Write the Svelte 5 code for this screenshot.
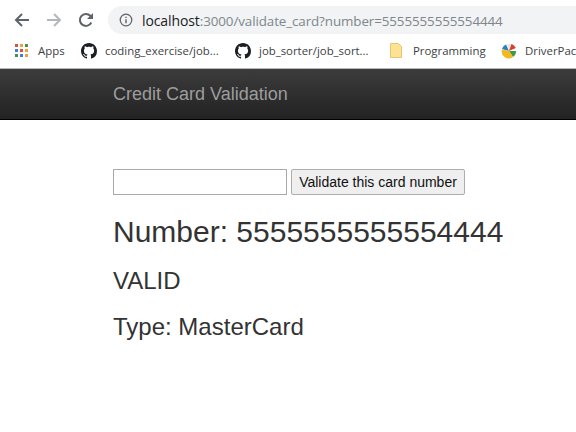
<script>
  const bookmarks = [
    { kind: 'gh', label: 'coding_exercise/job...', w: 154 },
    { kind: 'gh', label: 'job_sorter/job_sort...', w: 155 },
    { kind: 'folder', label: 'Programming', w: 111 },
    { kind: 'driver', label: 'DriverPack Online', w: 120 }
  ];
  const ghPath = 'M8 0C3.58 0 0 3.58 0 8c0 3.54 2.29 6.53 5.47 7.59.4.07.55-.17.55-.38 0-.19-.01-.82-.01-1.49-2.01.37-2.53-.49-2.69-.94-.09-.23-.48-.94-.82-1.13-.28-.15-.68-.52-.01-.53.63-.01 1.08.58 1.23.82.72 1.21 1.87.87 2.33.66.07-.52.28-.87.51-1.07-1.78-.2-3.64-.89-3.64-3.95 0-.87.31-1.59.82-2.15-.08-.2-.36-1.02.08-2.12 0 0 .67-.21 2.2.82.64-.18 1.32-.27 2-.27s1.36.09 2 .27c1.53-1.04 2.2-.82 2.2-.82.44 1.1.16 1.92.08 2.12.51.56.82 1.27.82 2.15 0 3.07-1.87 3.75-3.65 3.95.29.25.54.73.54 1.48 0 1.07-.01 1.93-.01 2.2 0 .21.15.46.55.38A8.01 8.01 0 0 0 16 8c0-4.42-3.58-8-8-8z';
  const dotColors = ['#d9503f', '#e8a33d', '#4a8f4f', '#3f7fd9', '#d9503f', '#e8a33d', '#4a8f4f', '#3f7fd9', '#e8a33d'];
</script>

<div class="page">
  <div class="toolbar">
    <button class="nav" aria-label="Back">
      <svg viewBox="0 0 16 16" width="16" height="16"><path d="M15 8H2.5M8 2 2 8l6 6" fill="none" stroke="#5f6368" stroke-width="2"/></svg>
    </button>
    <button class="nav" aria-label="Forward">
      <svg viewBox="0 0 16 16" width="16" height="16"><path d="M1 8h12.5M8 2l6 6-6 6" fill="none" stroke="#b4b7ba" stroke-width="2"/></svg>
    </button>
    <button class="nav" aria-label="Reload">
      <svg viewBox="0 0 16 16" width="16" height="16"><path d="M13.3 10.5A6 6 0 1 1 12.3 3.8L14 5.5" fill="none" stroke="#5f6368" stroke-width="2"/><path d="M15 1v6H9z" fill="#5f6368"/></svg>
    </button>
    <div class="omnibox">
      <svg class="info" viewBox="0 0 16 16" width="14" height="14"><circle cx="8" cy="8" r="6.6" fill="none" stroke="#5f6368" stroke-width="1.4"/><path d="M8 7v4.6M8 4.2v1.6" stroke="#5f6368" stroke-width="1.6"/></svg>
      <span class="url"><span class="host">localhost</span>:3000/validate_card?number=5555555555554444</span>
    </div>
  </div>

  <div class="bookmarks">
    <div class="bm apps">
      <svg viewBox="0 0 13 13" width="13" height="13">
        {#each dotColors as c, i}
          <rect x={(i % 3) * 5} y={Math.floor(i / 3) * 5} width="3" height="3" fill={c} />
        {/each}
      </svg>
      <span>Apps</span>
    </div>
    {#each bookmarks as b}
      <div class="bm" style="width:{b.w}px">
        {#if b.kind === 'gh'}
          <svg viewBox="0 0 16 16" width="16" height="16"><path d={ghPath} fill="#1b1f23"/></svg>
        {:else if b.kind === 'folder'}
          <svg class="folder" viewBox="0 0 12 15" width="12" height="15"><path d="M.5.5h8l3 3v11H.5z" fill="#fde293" stroke="#e8c670"/></svg>
        {:else}
          <svg viewBox="0 0 16 16" width="16" height="16">
            <path d="M8 8 1 6A7 7 0 0 1 5 1.5z" fill="#2a7fc0"/>
            <path d="M8 8 6 1.2A7 7 0 0 1 10.5 1z" fill="#e8e8e8"/>
            <path d="M8 8 10.5 1a7 7 0 0 1 4.3 4z" fill="#d9402f"/>
            <path d="M8 8h7a7 7 0 0 1-3 6z" fill="#3f9a45"/>
            <path d="M8 8l4 6a7 7 0 0 1-11-7.5z" fill="#f4b81e"/>
          </svg>
        {/if}
        <span class="bm-label">{b.label}</span>
      </div>
    {/each}
  </div>

  <nav class="navbar"><span class="brand">Credit Card Validation</span></nav>

  <main class="content">
    <form class="card-form" onsubmit={(e) => e.preventDefault()}>
      <input type="text" aria-label="Card number" />
      <button type="submit" class="submit">Validate this card number</button>
    </form>
    <h1>Number: 5555555555554444</h1>
    <h2>VALID</h2>
    <h2>Type: MasterCard</h2>
  </main>
</div>

<style>
  :global(body) {
    margin: 0;
    background: #fff;
    overflow: hidden;
  }
  .page {
    width: 576px;
    height: 432px;
    overflow: hidden;
    font-family: "Liberation Sans", Arial, sans-serif;
  }
  .toolbar {
    height: 36px;
    box-sizing: border-box;
    padding: 4px 0 0 14px;
    display: flex;
    align-items: center;
    background: #fff;
  }
  .nav {
    width: 16px;
    height: 16px;
    padding: 0;
    margin-right: 16px;
    border: 0;
    background: none;
    display: flex;
  }
  .nav:nth-child(3) {
    margin-right: 14px;
  }
  .omnibox {
    flex: 1;
    height: 28px;
    margin-right: -20px;
    padding-left: 11px;
    display: flex;
    align-items: center;
    gap: 9px;
    border-radius: 14px 0 0 14px;
    background: #f1f3f4;
  }
  .info {
    flex: none;
  }
  .url {
    font: 13.4px "Open Sans", sans-serif;
    color: #80868b;
    white-space: nowrap;
    letter-spacing: -0.1px;
  }
  .host {
    font-size: 14px;
    color: #202124;
  }
  .bookmarks {
    height: 33px;
    box-sizing: border-box;
    padding: 0 0 3px 15px;
    display: flex;
    align-items: center;
    background: #fff;
    border-bottom: 1px solid #b8b8b8;
    overflow: hidden;
  }
  .bm {
    display: flex;
    align-items: center;
    gap: 8px;
    flex: none;
    font: 11.4px "Open Sans", sans-serif;
    color: #3c4043;
    white-space: nowrap;
  }
  .bm svg {
    flex: none;
  }
  .apps {
    width: 66px;
    gap: 10px;
  }
  .folder {
    margin: 0 3px 0 0;
  }
  .navbar {
    height: 51px;
    box-sizing: border-box;
    padding-left: 113px;
    display: flex;
    align-items: center;
    background: linear-gradient(#3c3c3c, #222);
    border-bottom: 1px solid #000;
  }
  .brand {
    font-size: 18px;
    color: #9d9d9d;
  }
  .content {
    padding: 49px 0 0 113px;
    color: #333;
  }
  .card-form {
    display: flex;
    gap: 4px;
    height: 26px;
  }
  input {
    width: 174px;
    height: 26px;
    box-sizing: border-box;
    padding: 0;
    border: 1px solid #a9a9a9;
    background: #fff;
  }
  .submit {
    width: 174px;
    height: 26px;
    padding: 0;
    border: 1px solid #adadad;
    border-radius: 2px;
    background: #efefef;
    color: #111;
    font: 14px "Liberation Sans", Arial, sans-serif;
  }
  h1 {
    margin: 20px 0 0;
    font-size: 30px;
    line-height: 33px;
    font-weight: 400;
  }
  h2 {
    margin: 20px 0 0;
    font-size: 24px;
    line-height: 26px;
    font-weight: 400;
  }
  h1 + h2 {
    margin-top: 20px;
  }
</style>
